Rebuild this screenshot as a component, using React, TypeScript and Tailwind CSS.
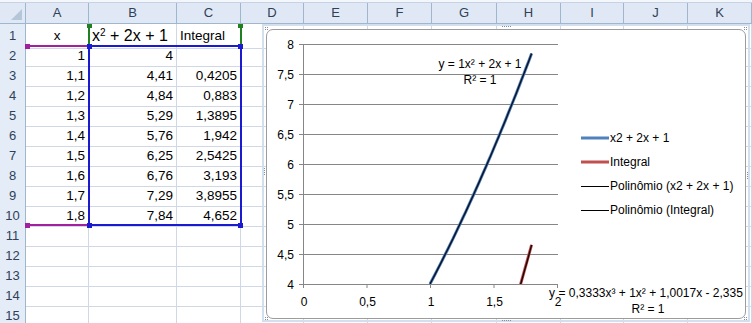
import React from 'react';

const COLS = ['A', 'B', 'C', 'D', 'E', 'F', 'G', 'H', 'I', 'J', 'K'];

const DATA: string[][] = [
  ['1', '4', ''],
  ['1,1', '4,41', '0,4205'],
  ['1,2', '4,84', '0,883'],
  ['1,3', '5,29', '1,3895'],
  ['1,4', '5,76', '1,942'],
  ['1,5', '6,25', '2,5425'],
  ['1,6', '6,76', '3,193'],
  ['1,7', '7,29', '3,8955'],
  ['1,8', '7,84', '4,652'],
];

const GRID = 'grid grid-cols-[26px_63px_88px_64px_63px_64px_64px_65px_64px_63px_64px_64px]';
const HEAD = 'flex items-center justify-center border-r border-b border-[#9eb6ce] bg-[#dfe8f4] text-[13px] text-[#2f4159]';
const CELL = 'flex items-center border-r border-b border-[#d0d7e5] px-[3px] text-[13.5px] text-black';

// chart helpers, local chart coords
const px = (x: number) => 36 + 127 * x;
const py = (y: number) => 254 - (y - 4) * 60;

function curve(f: (x: number) => number, from: number, to: number) {
  const pts: string[] = [];
  for (let i = 0; i <= 40; i++) {
    const x = from + ((to - from) * i) / 40;
    pts.push(`${px(x).toFixed(1)},${py(f(x)).toFixed(1)}`);
  }
  return pts.join(' ');
}

function Dots({ cols, rows }: { cols: number; rows: number }) {
  return (
    <div className={`grid gap-px ${cols === 2 ? 'grid-cols-2' : cols === 5 ? 'grid-cols-5' : 'grid-cols-1'}`}>
      {Array.from({ length: cols * rows }).map((_, i) => (
        <div key={i} className="h-px w-px bg-[#7d8ea6]" />
      ))}
    </div>
  );
}

function Chart() {
  const sq = (x: number) => x * x + 2 * x + 1;
  const cub = (x: number) => 0.3333 * x * x * x + x * x + 1.0017 * x - 2.335;
  const yTicks = ['8', '7,5', '7', '6,5', '6', '5,5', '5', '4,5', '4'];
  const xTicks = ['0', '0,5', '1', '1,5', '2'];
  const legend = [
    { label: 'x2 + 2x + 1', color: '#4f81bd', w: 3, off: 0 },
    { label: 'Integral', color: '#c0504d', w: 3, off: 0 },
    { label: 'Polinômio (x2 + 2x + 1)', color: '#000', w: 1, off: 0.5 },
    { label: 'Polinômio (Integral)', color: '#000', w: 1, off: 0.5 },
  ];
  const integralPts = [
    [1.1, 0.4205], [1.2, 0.883], [1.3, 1.3895], [1.4, 1.942],
    [1.5, 2.5425], [1.6, 3.193], [1.7, 3.8955], [1.8, 4.652],
  ].map(([x, y]) => `${px(x)},${py(y)}`).join(' ');

  return (
    <div className="absolute left-[262px] top-[24px] h-[298px] w-[488px] border-[2px] border-[#d3dfec]">
      <div className="absolute left-[1px] top-[1px]"><Dots cols={2} rows={2} /></div>
      <div className="absolute right-[1px] top-[1px]"><Dots cols={2} rows={2} /></div>
      <div className="absolute bottom-[0px] left-[1px]"><Dots cols={2} rows={2} /></div>
      <div className="absolute bottom-[0px] right-[1px]"><Dots cols={2} rows={2} /></div>
      <div className="absolute left-[238px] top-[0px]"><Dots cols={5} rows={1} /></div>
      <div className="absolute bottom-[-1px] left-[238px]"><Dots cols={5} rows={1} /></div>
      <div className="absolute left-[0px] top-[142px]"><Dots cols={1} rows={4} /></div>
      <div className="absolute right-[0px] top-[146px]"><Dots cols={1} rows={4} /></div>

      <div className="absolute left-[2px] top-[3px] h-[290px] w-[480px] overflow-hidden rounded-[7px] border border-[#9c9c9c] bg-white">
        <svg width="480" height="290" className="block font-['Liberation_Sans',Arial,sans-serif]">
          <defs>
            <clipPath id="plot">
              <rect x="36" y="14" width="255" height="240" />
            </clipPath>
          </defs>
          {yTicks.map((t, i) => (
            <g key={t}>
              <line x1="32" x2="291" y1={14 + i * 30 + 0.5} y2={14 + i * 30 + 0.5} stroke="#868686" strokeWidth="1" />
              <text x="27" y={14 + i * 30 + 4.5} fontSize="12" textAnchor="end" fill="#000">{t}</text>
            </g>
          ))}
          <line x1="36.5" x2="36.5" y1="14" y2="258" stroke="#868686" />
          {xTicks.map((t, i) => (
            <g key={t}>
              <line x1={px(i * 0.5) + 0.5} x2={px(i * 0.5) + 0.5} y1="254" y2="258" stroke="#868686" />
              <text x={px(i * 0.5) + 1} y="276" fontSize="12" textAnchor="middle" fill="#000">{t}</text>
            </g>
          ))}
          <g clipPath="url(#plot)">
            <polyline points={curve(sq, 1, 1.8)} fill="none" stroke="#4f81bd" strokeWidth="3" strokeLinejoin="round" />
            <polyline points={integralPts} fill="none" stroke="#c0504d" strokeWidth="3" strokeLinejoin="round" />
            <polyline points={curve(sq, 1, 1.8)} fill="none" stroke="#0a1226" strokeWidth="1.4" />
            <polyline points={curve(cub, 1.1, 1.8)} fill="none" stroke="#1a0505" strokeWidth="1.4" />
          </g>
          <text x="213" y="38" fontSize="12" textAnchor="middle" fill="#000">y = 1x² + 2x + 1</text>
          <text x="213" y="54" fontSize="12" textAnchor="middle" fill="#000">R² = 1</text>
          <text x="379" y="267" fontSize="12" textAnchor="middle" fill="#000">y = 0,3333x³ + 1x² + 1,0017x - 2,335</text>
          <text x="381" y="283" fontSize="12" textAnchor="middle" fill="#000">R² = 1</text>
          {legend.map((l, i) => (
            <g key={l.label}>
              <line x1="314" x2="342" y1={108 + i * 24 + l.off} y2={108 + i * 24 + l.off} stroke={l.color} strokeWidth={l.w} />
              <text x="343" y={112 + i * 24} fontSize="12" fill="#000">{l.label}</text>
            </g>
          ))}
        </svg>
      </div>
    </div>
  );
}

export default function App() {
  const rows: string[][] = [...DATA, ...Array.from({ length: 5 }, () => ['', '', ''])];
  return (
    <div className="relative h-[323px] w-[752px] overflow-hidden bg-white font-['Liberation_Sans',Arial,sans-serif]">
      <div className="h-[3px] border-b border-[#c5d3e3] bg-[#f3f6fa]" />
      <div className={`${GRID} h-[21px]`}>
        <div className={`${HEAD} relative bg-[#dfe8f4]`}>
          <div className="absolute bottom-[3px] right-[3px] h-0 w-0 border-b-[11px] border-l-[11px] border-b-[#b5c6d9] border-l-transparent" />
        </div>
        {COLS.map((c) => (
          <div key={c} className={HEAD}>{c}</div>
        ))}
      </div>
      <div className={`${GRID} h-[22px]`}>
        <div className={`${HEAD} bg-[#e4ecf7]`}>1</div>
        <div className={`${CELL} justify-center`}>x</div>
        <div className={`${CELL} pl-[3px] text-[16px]`}>
          <span>x<sup className="text-[10px]">2</sup> + 2x + 1</span>
        </div>
        <div className={CELL}>Integral</div>
        {COLS.slice(3).map((c) => (
          <div key={c} className={CELL} />
        ))}
      </div>
      {rows.map((r, i) => (
        <div key={i} className={`${GRID} h-[20px]`}>
          <div className={`${HEAD} bg-[#e4ecf7]`}>{i + 2}</div>
          {r.map((v, j) => (
            <div key={j} className={`${CELL} justify-end`}>{v}</div>
          ))}
          {COLS.slice(3).map((c) => (
            <div key={c} className={CELL} />
          ))}
        </div>
      ))}

      {/* range highlights */}
      <div className="absolute left-[26px] top-[45px] h-[2px] w-[63px] bg-[#a020a0]" />
      <div className="absolute left-[26px] top-[224px] h-[2px] w-[63px] bg-[#a020a0]" />
      <div className="absolute left-[25px] top-[44px] h-[5px] w-[5px] bg-[#a020a0]" />
      <div className="absolute left-[25px] top-[223px] h-[5px] w-[5px] bg-[#a020a0]" />
      <div className="absolute left-[88px] top-[24px] h-[22px] w-[2px] bg-[#208020]" />
      <div className="absolute left-[240px] top-[24px] h-[22px] w-[2px] bg-[#208020]" />
      <div className="absolute left-[87px] top-[24px] h-[4px] w-[5px] bg-[#208020]" />
      <div className="absolute left-[238px] top-[24px] h-[4px] w-[5px] bg-[#208020]" />
      <div className="absolute left-[88px] top-[45px] h-[181px] w-[154px] border-2 border-[#1a1ad0]" />
      <div className="absolute left-[87px] top-[44px] h-[5px] w-[5px] bg-[#1a1ad0]" />
      <div className="absolute left-[238px] top-[44px] h-[5px] w-[5px] bg-[#1a1ad0]" />
      <div className="absolute left-[87px] top-[223px] h-[5px] w-[5px] bg-[#1a1ad0]" />
      <div className="absolute left-[238px] top-[223px] h-[5px] w-[5px] bg-[#1a1ad0]" />

      <Chart />
    </div>
  );
}
